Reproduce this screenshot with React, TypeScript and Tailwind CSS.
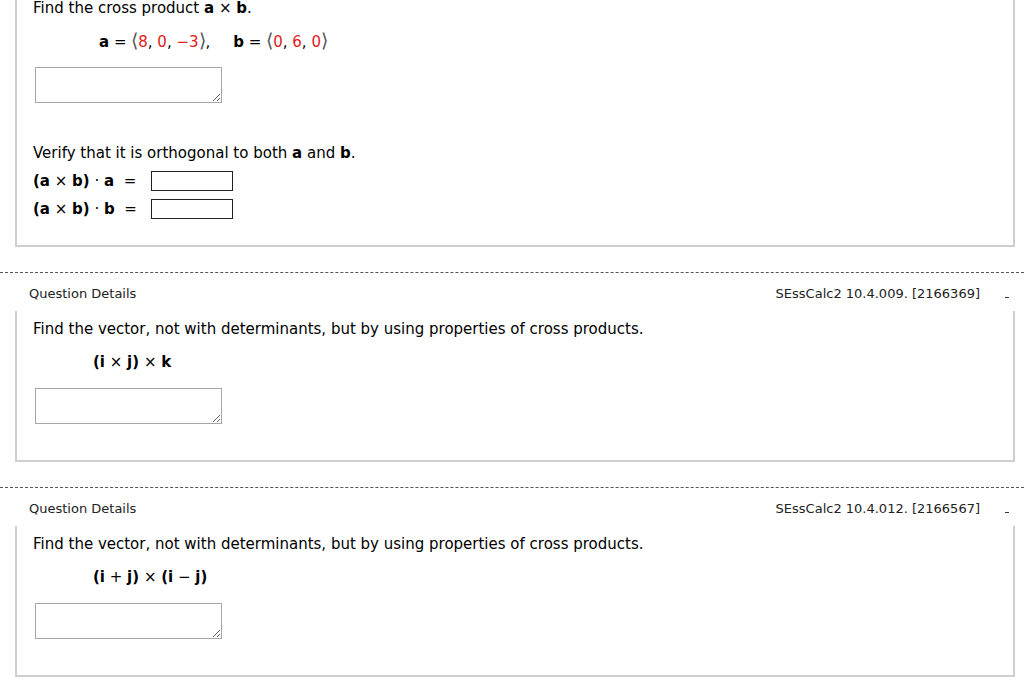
import React from "react";

const font = { fontFamily: '"DejaVu Sans", Verdana, sans-serif' };

function Answer() {
  return (
    <textarea
      className="block w-[187px] h-[36px] border border-[#a6a6a6] bg-white ml-[2px] resize"
      readOnly
    />
  );
}

function Header({ id }: { id: string }) {
  return (
    <div className="border-t border-dashed border-[#555] pt-[13px] pb-[9px] flex items-center text-[13px] leading-4 text-[#222] mt-[25px]">
      <span className="ml-[29px]">Question Details</span>
      <span className="ml-auto">{id}</span>
      <span className="ml-[25px] mr-[15px] mt-[7px] w-[4px] h-px bg-[#333]" />
    </div>
  );
}

function Panel({ children, className = "pb-[36px]" }: { children: React.ReactNode; className?: string }) {
  return (
    <div className={"ml-[15px] mr-[9px] border-2 border-t-0 border-[#cfcfcf] pl-[16px] pt-2 " + className}>
      {children}
    </div>
  );
}

const Angle = ({ c }: { c: string }) => (
  <span className="text-[#555] text-[19px] leading-none font-light">{c}</span>
);
const Red = ({ c }: { c: string }) => <span className="text-[#e0201c]">{c}</span>;

export default function App() {
  return (
    <div className="w-[1024px] h-[684px] overflow-hidden bg-white text-black text-[15px] leading-5" style={font}>
      <Panel className="-mt-[10px] pb-[26px]">
        <p>
          Find the cross product <b>a</b> × <b>b</b>.
        </p>
        <p className="mt-[13px] h-5 pl-[66px] whitespace-pre">
          <b>a</b> = <Angle c="⟨" />
          <Red c="8" />, <Red c="0" />, <Red c="−3" />
          <Angle c="⟩" />,<span className="inline-block w-[23px]" />
          <b>b</b> = <Angle c="⟨" />
          <Red c="0" />, <Red c="6" />, <Red c="0" />
          <Angle c="⟩" />
        </p>
        <div className="mt-[16px]">
          <Answer />
        </div>
        <p className="mt-[40px]">
          Verify that it is orthogonal to both <b>a</b> and <b>b</b>.
        </p>
        <div className="mt-[8px] flex flex-col gap-[8px]">
          {["a", "b"].map((v) => (
            <div key={v} className="flex items-center h-5">
              <span className="w-[118px] whitespace-pre">
                <b>(a</b> × <b>b)</b> · <b>{v}</b>  =
              </span>
              <span className="block w-[82px] h-[20px] border border-[#222] bg-white" />
            </div>
          ))}
        </div>
      </Panel>

      <Header id="SEssCalc2 10.4.009. [2166369]" />
      <Panel>
        <p>Find the vector, not with determinants, but by using properties of cross products.</p>
        <p className="mt-[13px] pl-[60px]">
          <b>(i</b> × <b>j)</b> × <b>k</b>
        </p>
        <div className="mt-[16px]">
          <Answer />
        </div>
      </Panel>

      <Header id="SEssCalc2 10.4.012. [2166567]" />
      <Panel>
        <p>Find the vector, not with determinants, but by using properties of cross products.</p>
        <p className="mt-[13px] pl-[60px]">
          <b>(i</b> + <b>j)</b> × <b>(i</b> − <b>j)</b>
        </p>
        <div className="mt-[16px]">
          <Answer />
        </div>
      </Panel>
    </div>
  );
}
